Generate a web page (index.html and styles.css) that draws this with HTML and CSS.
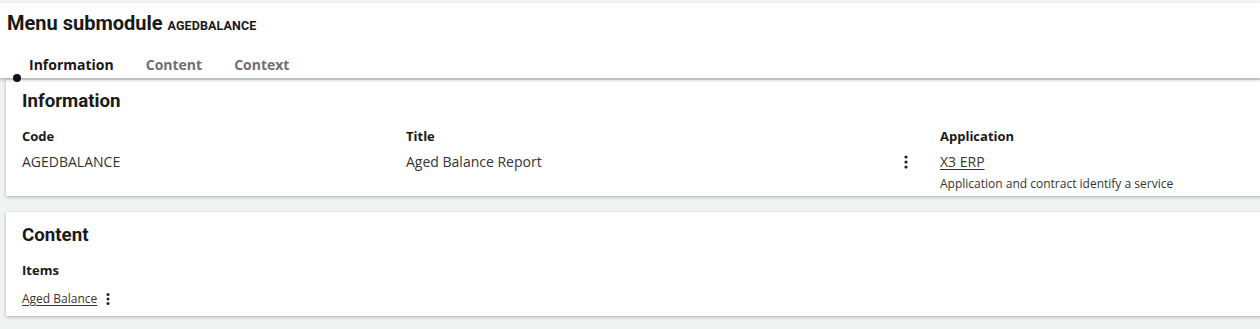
FILE: index.html
```html
<!DOCTYPE html>
<html>
<head>
<meta charset="utf-8">
<link rel="stylesheet" href="styles.css">
</head>
<body>
<div class="page">
  <header class="header">
    <h1 class="page-title">Menu submodule <span class="page-sub">AGEDBALANCE</span></h1>
    <nav class="tabs">
      <span class="tab active">Information</span>
      <span class="tab">Content</span>
      <span class="tab">Context</span>
    </nav>
    <span class="dot"></span>
  </header>
  <main class="main">
    <section class="card card-info">
      <h2 class="card-title">Information</h2>
      <div class="fields">
        <div class="field">
          <div class="label">Code</div>
          <div class="value">AGEDBALANCE</div>
        </div>
        <div class="field field-title">
          <div class="label">Title</div>
          <div class="value-row">
            <div class="value">Aged Balance Report</div>
            <svg class="kebab" width="4" height="14" viewBox="0 0 4 14"><circle cx="2" cy="2" r="1.6"/><circle cx="2" cy="7" r="1.6"/><circle cx="2" cy="12" r="1.6"/></svg>
          </div>
        </div>
        <div class="field">
          <div class="label">Application</div>
          <div class="value"><a class="link">X3 ERP</a></div>
          <div class="help">Application and contract identify a service</div>
        </div>
      </div>
    </section>
    <section class="card card-content">
      <h2 class="card-title">Content</h2>
      <div class="label">Items</div>
      <div class="item-row">
        <a class="link small">Aged Balance</a>
        <svg class="kebab" width="4" height="12" viewBox="0 0 4 12"><circle cx="2" cy="1.6" r="1.5"/><circle cx="2" cy="6" r="1.5"/><circle cx="2" cy="10.4" r="1.5"/></svg>
      </div>
    </section>
  </main>
</div>
</body>
</html>
```

FILE: styles.css
```css
html, body {
  margin: 0;
  padding: 0;
}
body {
  background: #f0f3f4;
  font-family: "Open Sans", "Noto Sans", sans-serif;
  color: #1a1a1a;
  overflow: hidden;
  width: 1260px;
  height: 329px;
}
.page {
  padding-top: 3px;
}
.header {
  position: relative;
  background: #ffffff;
  box-shadow: 0 2px 3px rgba(0, 0, 0, 0.25);
  z-index: 2;
  height: 75px;
}
.page-title {
  margin: 0;
  padding: 8px 0 0 7px;
  font-family: "Roboto", "Liberation Sans", sans-serif;
  font-size: 20px;
  font-weight: 700;
  color: #191919;
  line-height: 24px;
}
.page-sub {
  font-size: 12.5px;
  font-weight: 700;
  letter-spacing: 0.1px;
}
.tabs {
  display: flex;
  gap: 32px;
  padding: 17px 0 0 29px;
}
.tab {
  font-size: 14px;
  font-weight: 700;
  color: #707070;
  line-height: 20px;
}
.tab.active {
  color: #191919;
}
.dot {
  position: absolute;
  left: 13px;
  top: 71px;
  width: 8px;
  height: 8px;
  border-radius: 50%;
  background: #111;
}
.main {
  padding: 2px 0 0 6px;
  display: flex;
  flex-direction: column;
  gap: 16px;
}
.card {
  background: #ffffff;
  box-shadow: 0 1px 3px rgba(0, 0, 0, 0.3);
  margin-right: -20px;
  padding: 0 16px;
}
.card-info {
  height: 116px;
}
.card-content {
  height: 104px;
}
.card-title {
  margin: 0;
  padding-top: 10px;
  font-family: "Roboto", "Liberation Sans", sans-serif;
  font-size: 18.7px;
  font-weight: 700;
  line-height: 22px;
  color: #191919;
}
.card-content .card-title {
  padding-top: 12px;
}
.fields {
  display: grid;
  grid-template-columns: 384px 534px 1fr;
  margin-top: 15px;
}
.label {
  font-size: 13px;
  font-weight: 700;
  line-height: 18px;
  color: #191919;
}
.value {
  font-size: 14px;
  line-height: 20px;
  margin-top: 7px;
  color: #333;
}
.value-row {
  display: flex;
  align-items: flex-end;
  justify-content: space-between;
  padding-right: 32px;
}
.kebab {
  fill: #222;
  display: block;
}
.value-row .kebab {
  margin-bottom: 3px;
}
.link {
  color: #333;
  text-decoration: underline;
  text-underline-offset: 2px;
}
.help {
  font-size: 12px;
  line-height: 16px;
  margin-top: 4px;
  color: #333;
}
.card-content .label {
  margin-top: 15px;
}
.item-row {
  display: flex;
  align-items: center;
  gap: 9px;
  margin-top: 12px;
}
.link.small {
  font-size: 12px;
  line-height: 16px;
}
```
